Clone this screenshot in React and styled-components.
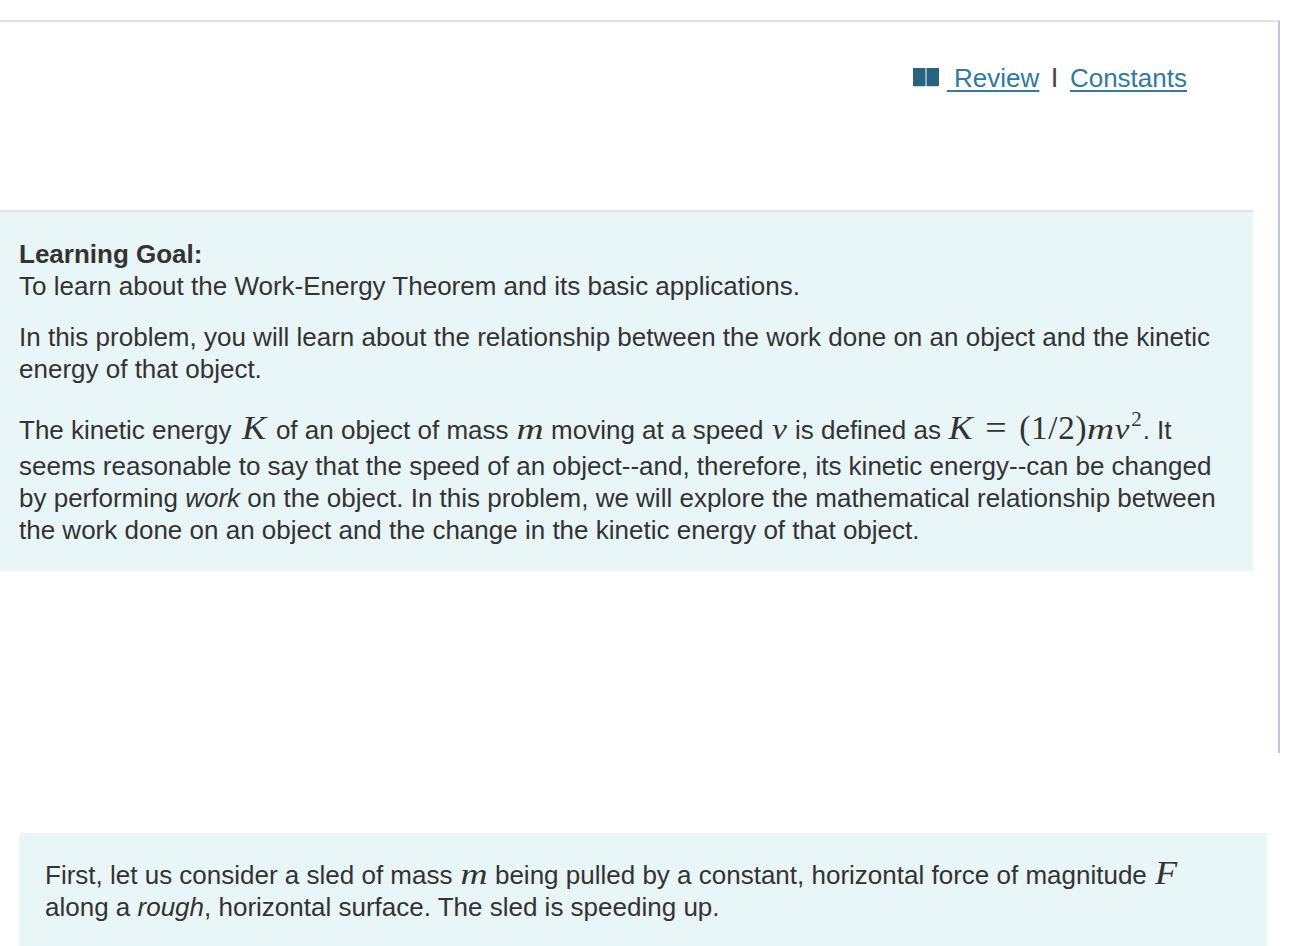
import React from "react";
import styled, { createGlobalStyle, css } from "styled-components";

const Global = createGlobalStyle`
	html, body {
		margin: 0;
		padding: 0;
		background: #fff;
	}
	body {
		font-family: "Liberation Sans", Arial, sans-serif;
		font-size: 26px;
		line-height: 32px;
		color: #333;
	}
`;

const Page = styled.div`
	width: 1302px;
	height: 946px;
	overflow: hidden;
	padding-top: 20px;
	box-sizing: border-box;
`;

const Sheet = styled.section`
	width: 1280px;
	height: 733px;
	box-sizing: border-box;
	border-top: 2px solid #e2e2e2;
	border-right: 2px solid #bcc5da;
`;

const Toolbar = styled.div`
	height: 188px;
	box-sizing: border-box;
	padding: 40px 91px 0 0;
	display: flex;
	justify-content: flex-end;
	align-items: flex-start;
`;

const ToolLink = styled.a`
	color: #2f7a9e;
	text-decoration: underline;
	text-underline-offset: 3px;
	white-space: pre;
`;

const Divider = styled.span`
	margin: -2px 12.5px 0;
	font-size: 20px;
	font-weight: bold;
	color: #444;
`;

const BookIcon = styled.svg`
	width: 26px;
	height: 21px;
	margin-right: 8px;
	margin-top: 5px;
`;

const GoalBox = styled.div`
	width: 1253px;
	height: 361px;
	box-sizing: border-box;
	background: #e8f6f7;
	border-top: 2px solid #e2e2e2;
	padding: 26px 19px 0;
`;

const Paragraph = styled.p`
	margin: ${(p) => p.$top || 0}px 0 0;
	width: 1210px;
`;

const Bold = styled.strong`
	display: block;
`;

//math glyphs are stretched a bit because there is no Computer Modern font here
const mathGlyph = css`
	display: inline-block;
	font-family: "Liberation Serif", "DejaVu Serif", serif;
	font-size: ${(p) => p.$size || 33}px;
	line-height: 1;
	text-align: center;
	width: ${(p) => p.$w}px;
	margin: 0 ${(p) => p.$gap || 0}px;
	transform: scaleX(${(p) => p.$sx || 1});
`;

const Var = styled.i`
	${mathGlyph}
`;

const Sym = styled.span`
	${mathGlyph}
`;

const Fraction = styled.span`
	${mathGlyph}
	letter-spacing: 0.8px;
	white-space: nowrap;
`;

const Sup = styled.span`
	font-family: "Liberation Serif", "DejaVu Serif", serif;
	font-size: 21px;
	line-height: 0;
	position: relative;
	top: -13px;
	margin: 0 1px;
`;

//makes the line with the formula a bit taller, like the tall brackets do
const Strut = styled.span`
	display: inline-block;
	width: 0;
	height: 36px;
	vertical-align: -11px;
`;

const PartBox = styled.div`
	margin: 80px 0 0 19px;
	width: 1248px;
	height: 113px;
	box-sizing: border-box;
	background: #e8f6f7;
	padding: 24px 26px 0;
`;

const App = () => {
	return (
		<>
			<Global />
			<Page>
				<Sheet>
					<Toolbar>
						<BookIcon viewBox="0 0 26 21">
							<path d="M0 1h12v18H0z" fill="#27627f" />
							<path d="M14 1h12v18H14z" fill="#27627f" />
							<path d="M12 1h2v18h-2z" fill="#8fb0c0" />
							<path d="M1 19h11l1 1.5 1-1.5h11v1H1z" fill="#c5d6de" />
						</BookIcon>
						<ToolLink href="#">{"\u00a0Review"}</ToolLink>
						<Divider>|</Divider>
						<ToolLink href="#">Constants</ToolLink>
					</Toolbar>
					<GoalBox>
						<Bold>Learning Goal:</Bold>
						To learn about the Work-Energy Theorem and its basic applications.
						<Paragraph $top={19}>
							In this problem, you will learn about the relationship between the work done on an object and the kinetic energy of that object.
						</Paragraph>
						<Paragraph $top={27}>
							<Strut />The kinetic energy <Var $w={26} $sx={1.1} $gap={2}>K</Var> of an object of mass <Var $w={28} $size={30} $sx={1.25}>m</Var> moving at a speed <Var $w={17} $size={30} $sx={1.1}>v</Var> is defined as <Var $w={25} $sx={1.1}>K</Var>
							<Sym $w={22} $gap={12} $sx={1.15}>=</Sym>
							<Fraction $w={68}>(1/2)</Fraction>
							<Var $w={27} $size={30} $sx={1.25}>m</Var>
							<Var $w={16} $size={30} $sx={1.1}>v</Var>
							<Sup>2</Sup>. It seems reasonable to say that the speed of an object--and, therefore, its kinetic energy--can be changed by performing <i>work</i> on the object. In this problem, we will explore the mathematical relationship between the work done on an object and the change in the kinetic energy of that object.
						</Paragraph>
					</GoalBox>
				</Sheet>
				<PartBox>
					First, let us consider a sled of mass <Var $w={28} $size={30} $sx={1.25}>m</Var> being pulled by a constant, horizontal force of magnitude <Var $w={24} $sx={1.1}>F</Var> along a <i>rough</i>, horizontal surface. The sled is speeding up.
				</PartBox>
			</Page>
		</>
	);
};

export default App;
